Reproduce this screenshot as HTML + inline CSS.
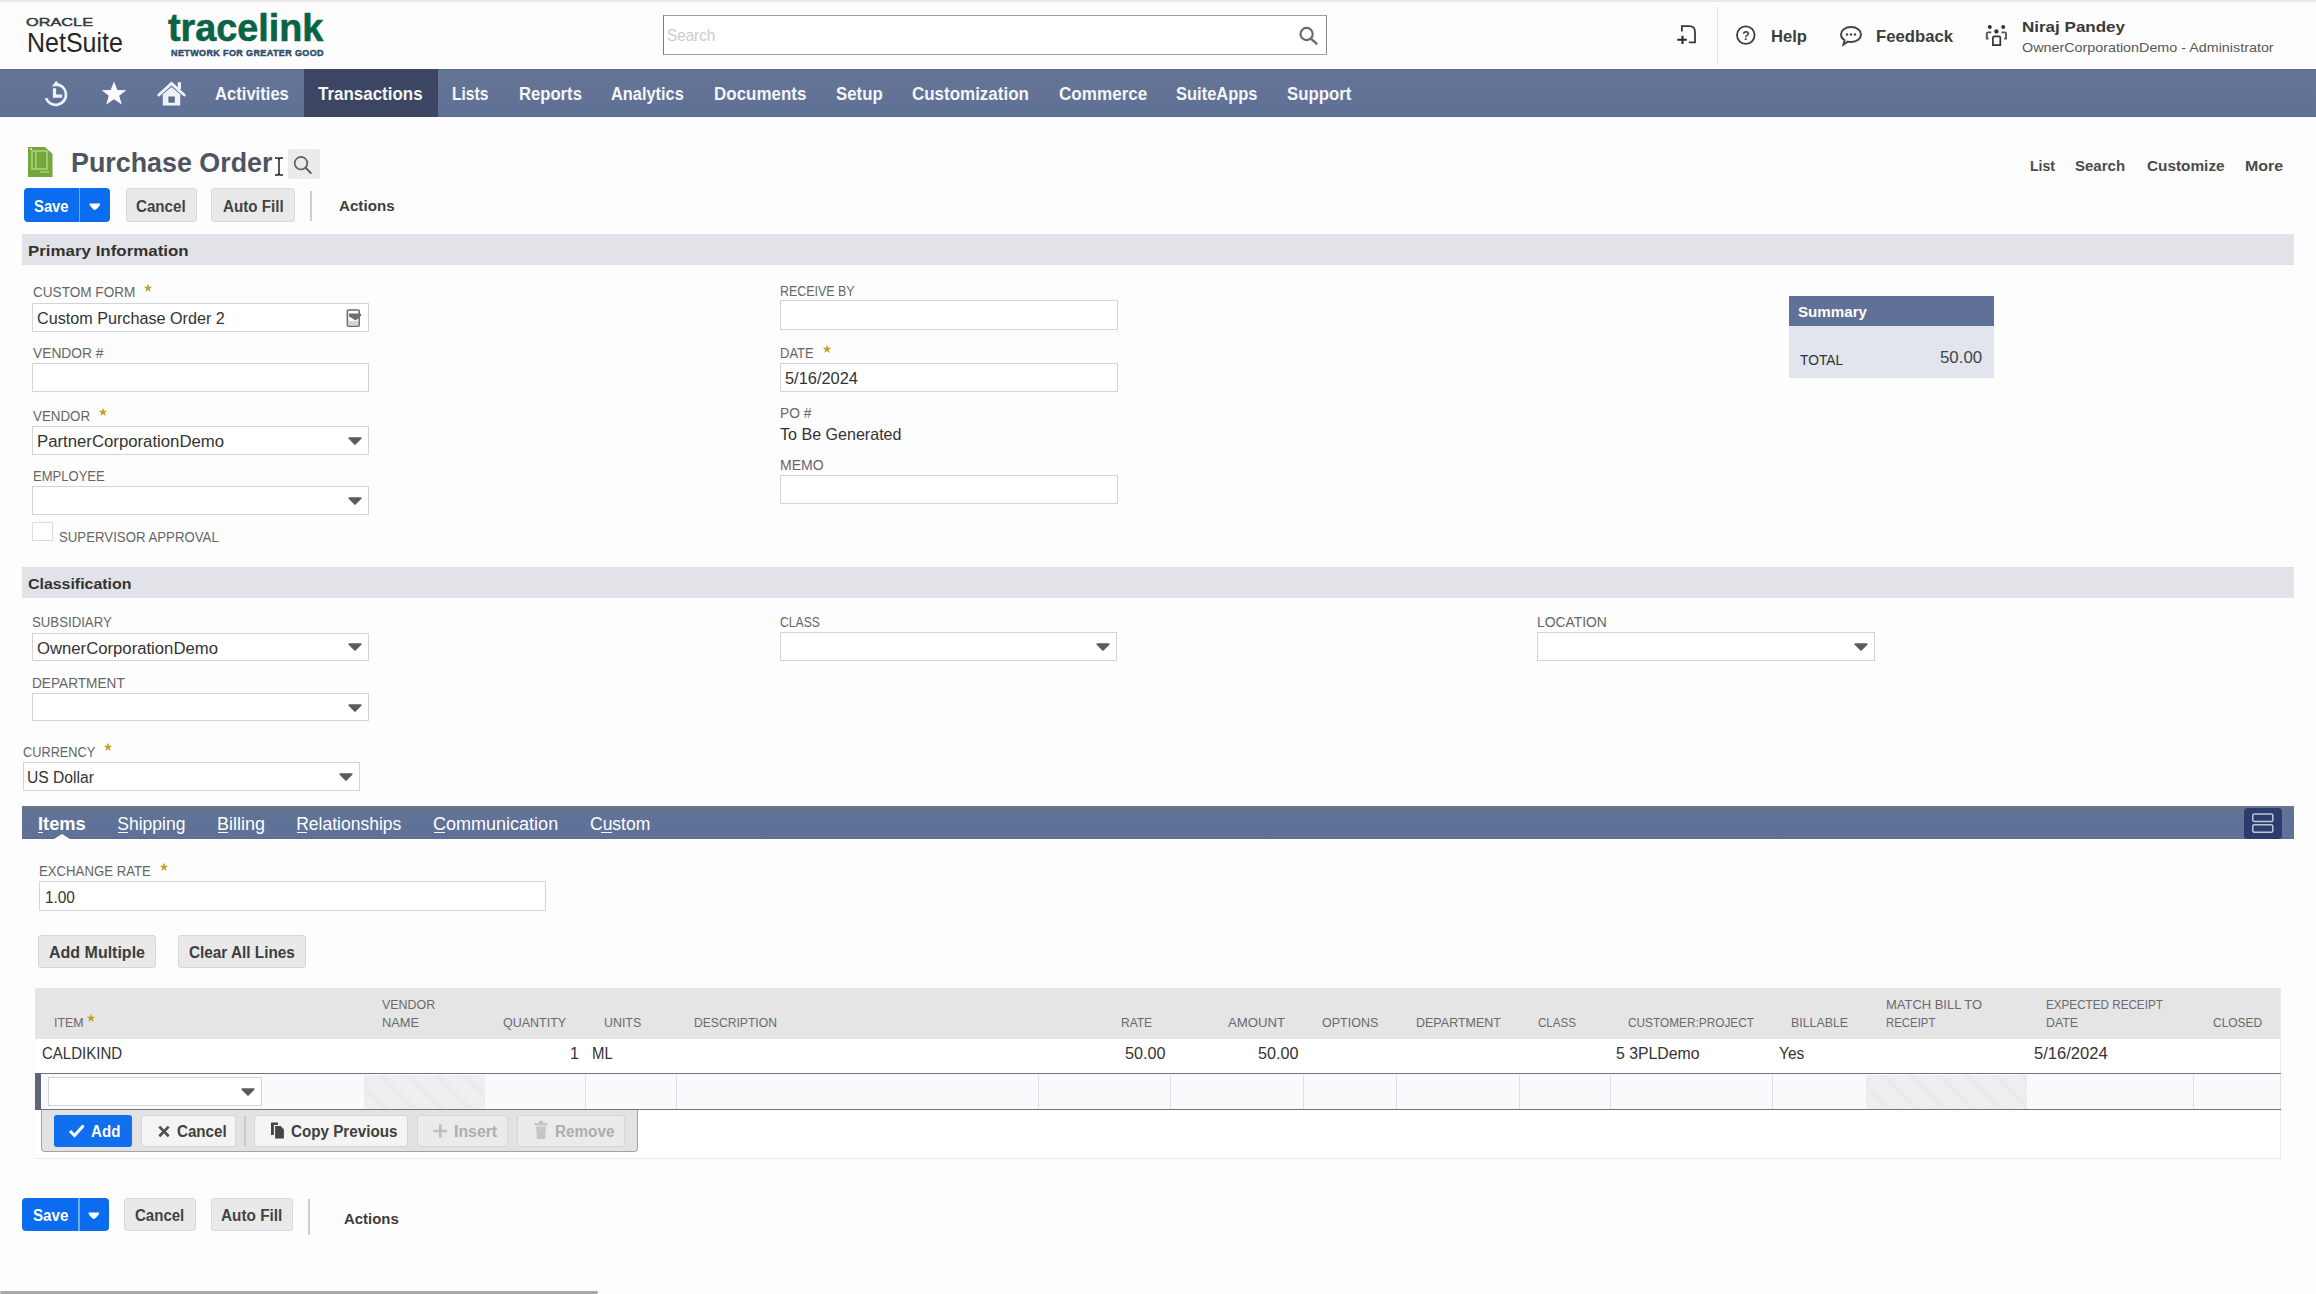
<!DOCTYPE html>
<html><head><meta charset="utf-8"><title>Purchase Order - NetSuite</title>
<style>
html,body{margin:0;padding:0;}
body{width:2316px;height:1294px;overflow:hidden;position:relative;background:#fdfdfd;font-family:"Liberation Sans",sans-serif;}
body>div,body>span,body>svg{position:absolute;}
.t{white-space:nowrap;line-height:1;}
svg{overflow:visible;}
</style></head><body>
<div style="left:0.0px;top:0.0px;width:2316.0px;height:2.0px;background:#e9e9e9"></div>
<span class="t" style="left:26.4px;top:17.4px;font-size:11.5px;color:#3a3a3a;transform:scaleX(1.4180);transform-origin:0 0;-webkit-text-stroke:0.45px #3a3a3a;">ORACLE</span>
<span class="t" style="left:26.8px;top:29.0px;font-size:28.0px;color:#262626;transform:scaleX(0.8922);transform-origin:0 0;">NetSuite</span>
<span class="t" style="left:168.0px;top:8.2px;font-size:39.5px;color:#0b6345;font-weight:700;transform:scaleX(0.9562);transform-origin:0 0;-webkit-text-stroke:0.6px #0b6345;">tracelink</span>
<span class="t" style="left:171.0px;top:48.7px;font-size:9.0px;color:#2d4d6e;font-weight:700;letter-spacing:0.38px;-webkit-text-stroke:0.45px #2d4d6e;">NETWORK FOR GREATER GOOD</span>
<div style="left:662.7px;top:14.5px;width:663.9px;height:40.8px;border:1.8px solid #9d9d9f;border-left-color:#7d7d7f;border-right-color:#8a8a8c;box-sizing:border-box;background:#fff"></div>
<span class="t" style="left:667.2px;top:27.4px;font-size:17.0px;color:#cbcbcb;transform:scaleX(0.8965);transform-origin:0 0;">Search</span>
<svg style="left:1297.0px;top:25.0px;" width="24.0" height="24.0" viewBox="0 0 24.0 24.0"><circle cx="9.6" cy="9" r="6.1" fill="none" stroke="#6a6a6a" stroke-width="2.2"/><line x1="14.2" y1="13.9" x2="19.5" y2="18.7" stroke="#6a6a6a" stroke-width="2.4" stroke-linecap="round"/></svg>
<svg style="left:1675.0px;top:24.0px;" width="24.0" height="23.0" viewBox="0 0 24.0 23.0"><path d="M6.9 7.4 V2.2 H14.4 Q20 2.2 20 8.2 V18.4 H13.8" fill="none" stroke="#3a3a3a" stroke-width="1.8"/><path d="M7.5 11.7 V19.9 M2.3 15.8 H11.8" stroke="#2a2a2a" stroke-width="2.1"/></svg>
<div style="left:1716.5px;top:7.0px;width:1.5px;height:57.0px;background:#e2e2e2"></div>
<svg style="left:1735.0px;top:24.0px;" width="24.0" height="23.0" viewBox="0 0 24.0 23.0"><circle cx="10.8" cy="11.1" r="8.8" fill="none" stroke="#3d3d3d" stroke-width="1.8"/><text x="10.9" y="15.6" font-size="12" font-weight="700" text-anchor="middle" fill="#3d3d3d" font-family="Liberation Sans">?</text></svg>
<span class="t" style="left:1770.9px;top:27.7px;font-size:16.5px;color:#3d3d3d;font-weight:700;transform:scaleX(1.0042);transform-origin:0 0;">Help</span>
<svg style="left:1839.0px;top:24.0px;" width="26.0" height="23.0" viewBox="0 0 26.0 23.0"><path d="M12 3 C18 3 22 6.5 22 10.5 C22 14.5 18 18 12 18 C10.8 18 9.8 17.9 8.8 17.6 L4.5 20.5 L5.6 16.3 C3.4 14.9 2 12.8 2 10.5 C2 6.5 6 3 12 3 Z" fill="none" stroke="#444" stroke-width="1.9"/><circle cx="8" cy="10.5" r="1.2" fill="#444"/><circle cx="12" cy="10.5" r="1.2" fill="#444"/><circle cx="16" cy="10.5" r="1.2" fill="#444"/></svg>
<span class="t" style="left:1875.8px;top:27.7px;font-size:16.5px;color:#3d3d3d;font-weight:700;transform:scaleX(1.0111);transform-origin:0 0;">Feedback</span>
<svg style="left:1983.0px;top:22.0px;" width="28.0" height="26.0" viewBox="0 0 28.0 26.0"><circle cx="6.8" cy="5" r="2" fill="#333"/><circle cx="20.2" cy="5" r="2" fill="#333"/><circle cx="13.4" cy="9.4" r="2.2" fill="#333"/><path d="M8.3 10.4 H5 Q3.8 10.4 3.8 11.6 V16.6 H5.6 M18.5 10.4 H21.8 Q23 10.4 23 11.6 V16.6 H21.2" fill="none" stroke="#555" stroke-width="1.9"/><path d="M9.9 23.2 V15.6 Q9.9 14.4 11.2 14.4 H16 Q17.3 14.4 17.3 15.6 V23.2 Z" fill="none" stroke="#333" stroke-width="1.7"/></svg>
<span class="t" style="left:2021.8px;top:18.6px;font-size:15.5px;color:#3a3a3a;font-weight:700;transform:scaleX(1.0972);transform-origin:0 0;">Niraj Pandey</span>
<span class="t" style="left:2021.8px;top:41.0px;font-size:13.0px;color:#585858;transform:scaleX(1.1021);transform-origin:0 0;">OwnerCorporationDemo - Administrator</span>
<div style="left:0.0px;top:69.0px;width:2316.0px;height:48.0px;background:linear-gradient(#5a6782 0,#647493 1.5px,#627396 50%,#5f7196 46px,#5b6a88 48px)"></div>
<div style="left:304.0px;top:69.0px;width:134.0px;height:48.0px;background:#3c4663"></div>
<svg style="left:42.0px;top:79.0px;" width="28.0" height="29.0" viewBox="0 0 28.0 29.0"><path d="M4.0 19.1 A10.3 10.3 0 1 0 13.9 5.3" fill="none" stroke="#eef3fb" stroke-width="2.7"/><path d="M9.8 7.4 L14.2 1.8 L17.8 7.0 Z" fill="#eef3fb"/><path d="M12.5 9.2 V17.2 H20.2" fill="none" stroke="#eef3fb" stroke-width="3.2"/></svg>
<svg style="left:100.0px;top:80.0px;" width="28.0" height="27.0" viewBox="0 0 28.0 27.0"><path d="M14 1.5 L17.3 10 L26.3 10.3 L19.2 15.8 L21.8 24.5 L14 19.3 L6.2 24.5 L8.8 15.8 L1.7 10.3 L10.7 10 Z" fill="#fff"/></svg>
<svg style="left:156.0px;top:79.0px;" width="32.0" height="28.0" viewBox="0 0 32.0 28.0"><path d="M2.8 16 L15.5 4.4 L28.2 16" fill="none" stroke="#eef3fb" stroke-width="2.9" stroke-linecap="round"/><rect x="21.8" y="3.2" width="3.2" height="6.8" fill="#eef3fb"/><path d="M6.8 15.2 L15.5 8 L24.2 15.2 V26.6 H6.8 Z" fill="#eef3fb"/><rect x="12.4" y="17.5" width="6.4" height="6.2" fill="#5f6d80"/></svg>
<span class="t" style="left:215.2px;top:86.4px;font-size:17.5px;color:#f4f6fa;font-weight:700;transform:scaleX(0.9492);transform-origin:0 0;">Activities</span>
<span class="t" style="left:318.0px;top:86.4px;font-size:17.5px;color:#f4f6fa;font-weight:700;transform:scaleX(0.9685);transform-origin:0 0;">Transactions</span>
<span class="t" style="left:452.3px;top:86.4px;font-size:17.5px;color:#f4f6fa;font-weight:700;transform:scaleX(0.8905);transform-origin:0 0;">Lists</span>
<span class="t" style="left:518.5px;top:86.4px;font-size:17.5px;color:#f4f6fa;font-weight:700;transform:scaleX(0.9512);transform-origin:0 0;">Reports</span>
<span class="t" style="left:611.2px;top:86.4px;font-size:17.5px;color:#f4f6fa;font-weight:700;transform:scaleX(0.9350);transform-origin:0 0;">Analytics</span>
<span class="t" style="left:714.0px;top:86.4px;font-size:17.5px;color:#f4f6fa;font-weight:700;transform:scaleX(0.9701);transform-origin:0 0;">Documents</span>
<span class="t" style="left:836.2px;top:86.4px;font-size:17.5px;color:#f4f6fa;font-weight:700;transform:scaleX(0.9604);transform-origin:0 0;">Setup</span>
<span class="t" style="left:912.3px;top:86.4px;font-size:17.5px;color:#f4f6fa;font-weight:700;transform:scaleX(0.9693);transform-origin:0 0;">Customization</span>
<span class="t" style="left:1058.9px;top:86.4px;font-size:17.5px;color:#f4f6fa;font-weight:700;transform:scaleX(0.9768);transform-origin:0 0;">Commerce</span>
<span class="t" style="left:1176.0px;top:86.4px;font-size:17.5px;color:#f4f6fa;font-weight:700;transform:scaleX(0.9422);transform-origin:0 0;">SuiteApps</span>
<span class="t" style="left:1287.3px;top:86.4px;font-size:17.5px;color:#f4f6fa;font-weight:700;transform:scaleX(0.9609);transform-origin:0 0;">Support</span>
<svg style="left:27.0px;top:146.0px;" width="27.0" height="32.0" viewBox="0 0 27.0 32.0"><path d="M1 1 H18 L25.5 8 V31 H1 Z" fill="#74a83d"/><rect x="5" y="5" width="15" height="18" fill="none" stroke="#b9d98c" stroke-width="1.3"/><line x1="9" y1="5" x2="9" y2="23" stroke="#b9d98c" stroke-width="1.3"/><rect x="13" y="25" width="9" height="2" fill="#9cc66a"/><rect x="3" y="2" width="2" height="2" fill="#cfe6ae"/></svg>
<span class="t" style="left:71.0px;top:149.6px;font-size:27.0px;color:#4d5462;font-weight:700;transform:scaleX(0.9944);transform-origin:0 0;">Purchase Order</span>
<svg style="left:274.0px;top:157.0px;" width="10.0" height="20.0" viewBox="0 0 10.0 20.0"><path d="M1 1 H4 Q5 1.5 5 3 V16 Q5 17.5 4 18 H1 M9 1 H6 Q5 1.5 5 3 M5 16 Q5 17.5 6 18 H9" stroke="#222" stroke-width="1.5" fill="none"/></svg>
<div style="left:288.2px;top:148.6px;width:31.6px;height:30.4px;background:#ebebed;border-radius:2px"></div>
<svg style="left:292.0px;top:154.0px;" width="22.0" height="22.0" viewBox="0 0 22.0 22.0"><circle cx="9" cy="9.2" r="6.3" fill="none" stroke="#606060" stroke-width="1.7"/><line x1="13.6" y1="13.8" x2="18.8" y2="19" stroke="#606060" stroke-width="2" stroke-linecap="round"/></svg>
<span class="t" style="left:2030.0px;top:157.7px;font-size:15.5px;color:#4a4a4a;font-weight:700;transform:scaleX(0.9091);transform-origin:0 0;">List</span>
<span class="t" style="left:2075.1px;top:157.7px;font-size:15.5px;color:#4a4a4a;font-weight:700;transform:scaleX(0.9681);transform-origin:0 0;">Search</span>
<span class="t" style="left:2146.5px;top:157.7px;font-size:15.5px;color:#4a4a4a;font-weight:700;transform:scaleX(0.9901);transform-origin:0 0;">Customize</span>
<span class="t" style="left:2245.4px;top:157.7px;font-size:15.5px;color:#4a4a4a;font-weight:700;transform:scaleX(1.0324);transform-origin:0 0;">More</span>
<div style="left:23.6px;top:188.3px;width:86.7px;height:33.9px;background:#0b6cf0;border-radius:4px"></div>
<div style="left:78.8px;top:188.3px;width:1.6px;height:33.9px;background:#6aaef8"></div>
<span class="t" style="left:34.3px;top:198.7px;font-size:16.0px;color:#fff;font-weight:700;transform:scaleX(0.9258);transform-origin:0 0;">Save</span>
<svg style="left:89.2px;top:202.5px;" width="12.0" height="8.0" viewBox="0 0 12.0 8.0"><path d="M0.3 0.4 H11.3 Q11.3 2.2 8.3 5.2 Q6.8 7 5.8 7 Q4.8 7 3.3 5.2 Q0.3 2.2 0.3 0.4 Z" fill="#fff"/></svg>
<div style="left:125.5px;top:188.3px;width:71.1px;height:33.9px;background:#e9e9ea;border:1px solid #d9d9db;box-sizing:border-box;border-radius:3px"></div>
<span class="t" style="left:135.9px;top:198.7px;font-size:16.0px;color:#434343;font-weight:700;transform:scaleX(0.9467);transform-origin:0 0;">Cancel</span>
<div style="left:211.2px;top:188.3px;width:83.5px;height:33.9px;background:#e9e9ea;border:1px solid #d9d9db;box-sizing:border-box;border-radius:3px"></div>
<span class="t" style="left:223.0px;top:198.7px;font-size:16.0px;color:#434343;font-weight:700;transform:scaleX(0.9484);transform-origin:0 0;">Auto Fill</span>
<div style="left:310.0px;top:191.0px;width:1.5px;height:30.3px;background:#cfcfcf"></div>
<span class="t" style="left:339.4px;top:198.3px;font-size:15.5px;color:#3d3d3d;font-weight:700;transform:scaleX(0.9776);transform-origin:0 0;">Actions</span>
<div style="left:22.0px;top:234.0px;width:2272.0px;height:31.4px;background:#e1e3e8"></div>
<span class="t" style="left:27.5px;top:243.9px;font-size:14.5px;color:#333;font-weight:700;transform:scaleX(1.1659);transform-origin:0 0;">Primary Information</span>
<span class="t" style="left:32.7px;top:283.9px;font-size:15.0px;color:#666;transform:scaleX(0.9053);transform-origin:0 0;">CUSTOM FORM</span>
<svg style="left:142.7px;top:282.5px;" width="11.0" height="10.0" viewBox="0 0 11.0 10.0"><path d="M5 0.8 L6.1 3.8 L9.3 3.8 L6.7 5.8 L7.7 8.9 L5 7 L2.3 8.9 L3.3 5.8 L0.7 3.8 L3.9 3.8 Z" fill="#c0a22c"/></svg>
<div style="left:32.0px;top:303.0px;width:337.3px;height:28.6px;background:#fff;border:1.5px solid #d4d4d6;box-sizing:border-box"></div>
<span class="t" style="left:37.0px;top:310.8px;font-size:16.0px;color:#333;transform:scaleX(1.0104);transform-origin:0 0;">Custom Purchase Order 2</span>
<svg style="left:345.0px;top:308.0px;" width="18.0" height="20.0" viewBox="0 0 18.0 20.0"><rect x="2.4" y="2" width="11.8" height="16.2" rx="1" fill="#fff" stroke="#6e6e6e" stroke-width="1.6"/><rect x="3.4" y="13" width="9.8" height="4.3" fill="#d4d4d6"/><path d="M4 5.6 H15.6 L16.4 7.2 L13.8 10 L10.4 12.6 L9.2 11.6 L4 8.6 Z" fill="#6d6d72"/></svg>
<span class="t" style="left:32.5px;top:344.9px;font-size:15.0px;color:#666;transform:scaleX(0.9186);transform-origin:0 0;">VENDOR #</span>
<div style="left:32.0px;top:363.0px;width:337.3px;height:29.0px;background:#fff;border:1.5px solid #d4d4d6;box-sizing:border-box"></div>
<span class="t" style="left:32.5px;top:407.6px;font-size:15.0px;color:#666;transform:scaleX(0.8904);transform-origin:0 0;">VENDOR</span>
<svg style="left:97.6px;top:406.8px;" width="11.0" height="10.0" viewBox="0 0 11.0 10.0"><path d="M5 0.8 L6.1 3.8 L9.3 3.8 L6.7 5.8 L7.7 8.9 L5 7 L2.3 8.9 L3.3 5.8 L0.7 3.8 L3.9 3.8 Z" fill="#c0a22c"/></svg>
<div style="left:32.0px;top:426.2px;width:337.3px;height:28.7px;background:#fff;border:1.5px solid #d4d4d6;box-sizing:border-box"></div>
<svg style="left:348.3px;top:437.0px;" width="14.0" height="8.0" viewBox="0 0 14.0 8.0"><path d="M1.3 1.2 H12.7 L7 6.9 Z" fill="#5c5c5c" stroke="#5c5c5c" stroke-width="1.9" stroke-linejoin="round"/></svg>
<span class="t" style="left:37.0px;top:434.0px;font-size:16.0px;color:#333;transform:scaleX(1.0467);transform-origin:0 0;">PartnerCorporationDemo</span>
<span class="t" style="left:32.5px;top:467.7px;font-size:15.0px;color:#666;transform:scaleX(0.8691);transform-origin:0 0;">EMPLOYEE</span>
<div style="left:32.0px;top:486.3px;width:337.3px;height:29.1px;background:#fff;border:1.5px solid #d4d4d6;box-sizing:border-box"></div>
<svg style="left:348.3px;top:497.4px;" width="14.0" height="8.0" viewBox="0 0 14.0 8.0"><path d="M1.3 1.2 H12.7 L7 6.9 Z" fill="#5c5c5c" stroke="#5c5c5c" stroke-width="1.9" stroke-linejoin="round"/></svg>
<div style="left:31.8px;top:521.5px;width:20.9px;height:19.7px;background:#fff;border:1.5px solid #dcdcdc;box-sizing:border-box"></div>
<span class="t" style="left:58.7px;top:528.6px;font-size:15.0px;color:#666;transform:scaleX(0.8817);transform-origin:0 0;">SUPERVISOR APPROVAL</span>
<span class="t" style="left:780.4px;top:282.7px;font-size:15.0px;color:#666;transform:scaleX(0.8289);transform-origin:0 0;">RECEIVE BY</span>
<div style="left:779.5px;top:300.0px;width:338.1px;height:29.8px;background:#fff;border:1.5px solid #d4d4d6;box-sizing:border-box"></div>
<span class="t" style="left:780.3px;top:344.9px;font-size:15.0px;color:#666;transform:scaleX(0.8669);transform-origin:0 0;">DATE</span>
<svg style="left:821.9px;top:344.0px;" width="11.0" height="10.0" viewBox="0 0 11.0 10.0"><path d="M5 0.8 L6.1 3.8 L9.3 3.8 L6.7 5.8 L7.7 8.9 L5 7 L2.3 8.9 L3.3 5.8 L0.7 3.8 L3.9 3.8 Z" fill="#c0a22c"/></svg>
<div style="left:779.5px;top:363.0px;width:338.1px;height:29.1px;background:#fff;border:1.5px solid #d4d4d6;box-sizing:border-box"></div>
<span class="t" style="left:784.8px;top:371.3px;font-size:16.0px;color:#333;transform:scaleX(1.0250);transform-origin:0 0;">5/16/2024</span>
<span class="t" style="left:780.3px;top:404.9px;font-size:15.0px;color:#666;transform:scaleX(0.9168);transform-origin:0 0;">PO #</span>
<span class="t" style="left:780.3px;top:426.3px;font-size:16.5px;color:#333;transform:scaleX(0.9739);transform-origin:0 0;">To Be Generated</span>
<span class="t" style="left:780.3px;top:457.0px;font-size:15.0px;color:#666;transform:scaleX(0.9373);transform-origin:0 0;">MEMO</span>
<div style="left:779.5px;top:475.0px;width:338.1px;height:29.2px;background:#fff;border:1.5px solid #d4d4d6;box-sizing:border-box"></div>
<div style="left:1789.0px;top:296.0px;width:205.0px;height:30.4px;background:#5f7197"></div>
<div style="left:1789.0px;top:326.4px;width:205.0px;height:51.4px;background:#e2e5ed"></div>
<span class="t" style="left:1798.0px;top:304.0px;font-size:15.5px;color:#fff;font-weight:700;transform:scaleX(0.9770);transform-origin:0 0;">Summary</span>
<span class="t" style="left:1799.7px;top:352.0px;font-size:15.0px;color:#333;transform:scaleX(0.9191);transform-origin:0 0;">TOTAL</span>
<span class="t" style="left:1940.3px;top:348.6px;font-size:17.0px;color:#444;transform:scaleX(0.9906);transform-origin:0 0;">50.00</span>
<div style="left:22.0px;top:567.0px;width:2272.0px;height:30.8px;background:#e1e3e8"></div>
<span class="t" style="left:27.6px;top:576.5px;font-size:14.5px;color:#333;font-weight:700;transform:scaleX(1.0971);transform-origin:0 0;">Classification</span>
<span class="t" style="left:32.0px;top:614.4px;font-size:15.0px;color:#666;transform:scaleX(0.8806);transform-origin:0 0;">SUBSIDIARY</span>
<div style="left:32.0px;top:632.8px;width:337.2px;height:28.2px;background:#fff;border:1.5px solid #d4d4d6;box-sizing:border-box"></div>
<svg style="left:348.2px;top:643.4px;" width="14.0" height="8.0" viewBox="0 0 14.0 8.0"><path d="M1.3 1.2 H12.7 L7 6.9 Z" fill="#5c5c5c" stroke="#5c5c5c" stroke-width="1.9" stroke-linejoin="round"/></svg>
<span class="t" style="left:37.1px;top:641.3px;font-size:16.0px;color:#333;transform:scaleX(1.0434);transform-origin:0 0;">OwnerCorporationDemo</span>
<span class="t" style="left:32.0px;top:674.8px;font-size:15.0px;color:#666;transform:scaleX(0.9098);transform-origin:0 0;">DEPARTMENT</span>
<div style="left:32.0px;top:693.2px;width:337.2px;height:28.3px;background:#fff;border:1.5px solid #d4d4d6;box-sizing:border-box"></div>
<svg style="left:348.2px;top:703.9px;" width="14.0" height="8.0" viewBox="0 0 14.0 8.0"><path d="M1.3 1.2 H12.7 L7 6.9 Z" fill="#5c5c5c" stroke="#5c5c5c" stroke-width="1.9" stroke-linejoin="round"/></svg>
<span class="t" style="left:780.4px;top:614.4px;font-size:15.0px;color:#666;transform:scaleX(0.8102);transform-origin:0 0;">CLASS</span>
<div style="left:779.5px;top:632.1px;width:337.7px;height:29.0px;background:#fff;border:1.5px solid #d4d4d6;box-sizing:border-box"></div>
<svg style="left:1096.2px;top:643.1px;" width="14.0" height="8.0" viewBox="0 0 14.0 8.0"><path d="M1.3 1.2 H12.7 L7 6.9 Z" fill="#5c5c5c" stroke="#5c5c5c" stroke-width="1.9" stroke-linejoin="round"/></svg>
<span class="t" style="left:1536.9px;top:614.4px;font-size:15.0px;color:#666;transform:scaleX(0.9243);transform-origin:0 0;">LOCATION</span>
<div style="left:1536.5px;top:632.1px;width:338.2px;height:29.0px;background:#fff;border:1.5px solid #d4d4d6;box-sizing:border-box"></div>
<svg style="left:1853.7px;top:643.1px;" width="14.0" height="8.0" viewBox="0 0 14.0 8.0"><path d="M1.3 1.2 H12.7 L7 6.9 Z" fill="#5c5c5c" stroke="#5c5c5c" stroke-width="1.9" stroke-linejoin="round"/></svg>
<span class="t" style="left:22.7px;top:743.5px;font-size:15.0px;color:#666;transform:scaleX(0.8506);transform-origin:0 0;">CURRENCY</span>
<svg style="left:103.3px;top:742.0px;" width="11.0" height="10.0" viewBox="0 0 11.0 10.0"><path d="M5 0.8 L6.1 3.8 L9.3 3.8 L6.7 5.8 L7.7 8.9 L5 7 L2.3 8.9 L3.3 5.8 L0.7 3.8 L3.9 3.8 Z" fill="#c0a22c"/></svg>
<div style="left:22.7px;top:761.9px;width:337.2px;height:28.7px;background:#fff;border:1.5px solid #d4d4d6;box-sizing:border-box"></div>
<svg style="left:338.9px;top:772.8px;" width="14.0" height="8.0" viewBox="0 0 14.0 8.0"><path d="M1.3 1.2 H12.7 L7 6.9 Z" fill="#5c5c5c" stroke="#5c5c5c" stroke-width="1.9" stroke-linejoin="round"/></svg>
<span class="t" style="left:27.0px;top:769.8px;font-size:16.0px;color:#333;transform:scaleX(0.9766);transform-origin:0 0;">US Dollar</span>
<div style="left:22.0px;top:805.7px;width:2272.0px;height:33.7px;background:linear-gradient(#6b7689 0,#63738f 4px,#5f7299 50%,#5f7196 31px,#5b6a88 33.7px)"></div>
<span class="t" style="left:37.8px;top:816.2px;font-size:17.5px;color:#fff;font-weight:700;transform:scaleX(1.0426);transform-origin:0 0;">Items</span>
<span class="t" style="left:117.3px;top:816.2px;font-size:17.5px;color:#fff;">Shipping</span>
<span class="t" style="left:217.0px;top:816.2px;font-size:17.5px;color:#fff;transform:scaleX(1.0267);transform-origin:0 0;">Billing</span>
<span class="t" style="left:296.2px;top:816.2px;font-size:17.5px;color:#fff;">Relationships</span>
<span class="t" style="left:433.0px;top:816.2px;font-size:17.5px;color:#fff;transform:scaleX(1.0294);transform-origin:0 0;">Communication</span>
<span class="t" style="left:590.0px;top:816.2px;font-size:17.5px;color:#fff;">Custom</span>
<div style="left:38.0px;top:831.6px;width:5.0px;height:1.5px;background:#f4f6fa"></div>
<div style="left:117.5px;top:831.6px;width:10.5px;height:1.5px;background:#f4f6fa"></div>
<div style="left:217.5px;top:831.6px;width:10.5px;height:1.5px;background:#f4f6fa"></div>
<div style="left:296.5px;top:831.6px;width:10.5px;height:1.5px;background:#f4f6fa"></div>
<div style="left:433.5px;top:831.6px;width:11.5px;height:1.5px;background:#f4f6fa"></div>
<div style="left:601.0px;top:831.6px;width:11.0px;height:1.5px;background:#f4f6fa"></div>
<svg style="left:51.5px;top:833.6px;" width="20.0" height="6.2" viewBox="0 0 20.0 6.2"><path d="M0 6.2 L10 0 L20 6.2 Z" fill="#fdfdfd"/></svg>
<div style="left:2244.4px;top:807.5px;width:37.3px;height:31.2px;background:#2b3d6c;border-radius:4px"></div>
<svg style="left:2250.0px;top:812.0px;" width="26.0" height="23.0" viewBox="0 0 26.0 23.0"><rect x="2.8" y="2" width="20" height="7.5" rx="1.5" fill="none" stroke="#bcc6dc" stroke-width="1.5"/><rect x="2.8" y="12.8" width="20" height="7.5" rx="1.5" fill="none" stroke="#bcc6dc" stroke-width="1.5"/></svg>
<span class="t" style="left:39.3px;top:863.1px;font-size:15.0px;color:#666;transform:scaleX(0.8786);transform-origin:0 0;">EXCHANGE RATE</span>
<svg style="left:159.2px;top:861.5px;" width="11.0" height="10.0" viewBox="0 0 11.0 10.0"><path d="M5 0.8 L6.1 3.8 L9.3 3.8 L6.7 5.8 L7.7 8.9 L5 7 L2.3 8.9 L3.3 5.8 L0.7 3.8 L3.9 3.8 Z" fill="#c0a22c"/></svg>
<div style="left:39.3px;top:881.3px;width:507.1px;height:29.6px;background:#fff;border:1.5px solid #d4d4d6;box-sizing:border-box"></div>
<span class="t" style="left:44.7px;top:889.7px;font-size:16.0px;color:#333;transform:scaleX(0.9606);transform-origin:0 0;">1.00</span>
<div style="left:38.1px;top:934.5px;width:117.5px;height:33.2px;background:#e9e9ea;border:1px solid #d6d6d8;box-sizing:border-box;border-radius:3px"></div>
<span class="t" style="left:49.0px;top:944.7px;font-size:16.0px;color:#3d3d3d;font-weight:700;">Add Multiple</span>
<div style="left:178.3px;top:934.5px;width:127.5px;height:33.2px;background:#e9e9ea;border:1px solid #d6d6d8;box-sizing:border-box;border-radius:3px"></div>
<span class="t" style="left:188.9px;top:944.7px;font-size:16.0px;color:#3d3d3d;font-weight:700;transform:scaleX(0.9575);transform-origin:0 0;">Clear All Lines</span>
<div style="left:34.5px;top:987.6px;width:2246.6px;height:51.1px;background:#e5e5e5;border-right:1px solid #ececec;box-sizing:border-box"></div>
<span class="t" style="left:53.5px;top:1016.3px;font-size:13.5px;color:#6a6a6a;transform:scaleX(0.9209);transform-origin:0 0;">ITEM</span>
<svg style="left:86.4px;top:1012.9px;" width="11.0" height="10.0" viewBox="0 0 11.0 10.0"><path d="M5 0.8 L6.1 3.8 L9.3 3.8 L6.7 5.8 L7.7 8.9 L5 7 L2.3 8.9 L3.3 5.8 L0.7 3.8 L3.9 3.8 Z" fill="#c0a22c"/></svg>
<span class="t" style="left:382.0px;top:998.4px;font-size:13.5px;color:#6a6a6a;transform:scaleX(0.9212);transform-origin:0 0;">VENDOR</span>
<span class="t" style="left:382.0px;top:1016.3px;font-size:13.5px;color:#6a6a6a;transform:scaleX(0.9487);transform-origin:0 0;">NAME</span>
<span class="t" style="left:502.6px;top:1016.3px;font-size:13.5px;color:#6a6a6a;transform:scaleX(0.9260);transform-origin:0 0;">QUANTITY</span>
<span class="t" style="left:603.8px;top:1016.3px;font-size:13.5px;color:#6a6a6a;transform:scaleX(0.9185);transform-origin:0 0;">UNITS</span>
<span class="t" style="left:694.3px;top:1016.3px;font-size:13.5px;color:#6a6a6a;transform:scaleX(0.8986);transform-origin:0 0;">DESCRIPTION</span>
<span class="t" style="left:1121.2px;top:1016.3px;font-size:13.5px;color:#6a6a6a;transform:scaleX(0.8886);transform-origin:0 0;">RATE</span>
<span class="t" style="left:1228.3px;top:1016.3px;font-size:13.5px;color:#6a6a6a;transform:scaleX(0.9744);transform-origin:0 0;">AMOUNT</span>
<span class="t" style="left:1322.3px;top:1016.3px;font-size:13.5px;color:#6a6a6a;transform:scaleX(0.9267);transform-origin:0 0;">OPTIONS</span>
<span class="t" style="left:1415.5px;top:1016.3px;font-size:13.5px;color:#6a6a6a;transform:scaleX(0.9264);transform-origin:0 0;">DEPARTMENT</span>
<span class="t" style="left:1537.5px;top:1016.3px;font-size:13.5px;color:#6a6a6a;transform:scaleX(0.8588);transform-origin:0 0;">CLASS</span>
<span class="t" style="left:1628.3px;top:1016.3px;font-size:13.5px;color:#6a6a6a;transform:scaleX(0.8765);transform-origin:0 0;">CUSTOMER:PROJECT</span>
<span class="t" style="left:1791.3px;top:1016.3px;font-size:13.5px;color:#6a6a6a;transform:scaleX(0.9157);transform-origin:0 0;">BILLABLE</span>
<span class="t" style="left:2213.0px;top:1016.3px;font-size:13.5px;color:#6a6a6a;transform:scaleX(0.8847);transform-origin:0 0;">CLOSED</span>
<span class="t" style="left:1885.6px;top:998.4px;font-size:13.5px;color:#6a6a6a;transform:scaleX(0.9600);transform-origin:0 0;">MATCH BILL TO</span>
<span class="t" style="left:1885.6px;top:1016.3px;font-size:13.5px;color:#6a6a6a;transform:scaleX(0.8444);transform-origin:0 0;">RECEIPT</span>
<span class="t" style="left:2046.2px;top:998.4px;font-size:13.5px;color:#6a6a6a;transform:scaleX(0.8652);transform-origin:0 0;">EXPECTED RECEIPT</span>
<span class="t" style="left:2046.2px;top:1016.3px;font-size:13.5px;color:#6a6a6a;transform:scaleX(0.9171);transform-origin:0 0;">DATE</span>
<div style="left:34.5px;top:1038.7px;width:2246.6px;height:120.6px;background:#fff;border-right:1px solid #ececec;border-bottom:1.5px solid #ebebeb;box-sizing:border-box"></div>
<span class="t" style="left:41.8px;top:1045.8px;font-size:16.0px;color:#333;transform:scaleX(0.9382);transform-origin:0 0;">CALDIKIND</span>
<span class="t" style="left:570.0px;top:1045.8px;font-size:16.0px;color:#333;">1</span>
<span class="t" style="left:591.7px;top:1045.8px;font-size:16.0px;color:#333;transform:scaleX(0.9303);transform-origin:0 0;">ML</span>
<span class="t" style="left:1124.7px;top:1045.8px;font-size:16.0px;color:#333;transform:scaleX(1.0100);transform-origin:0 0;">50.00</span>
<span class="t" style="left:1257.7px;top:1045.8px;font-size:16.0px;color:#333;transform:scaleX(1.0100);transform-origin:0 0;">50.00</span>
<span class="t" style="left:1616.2px;top:1045.8px;font-size:16.0px;color:#333;transform:scaleX(0.9893);transform-origin:0 0;">5 3PLDemo</span>
<span class="t" style="left:1779.2px;top:1045.8px;font-size:16.0px;color:#333;transform:scaleX(0.9646);transform-origin:0 0;">Yes</span>
<span class="t" style="left:2034.1px;top:1045.8px;font-size:16.0px;color:#333;transform:scaleX(1.0348);transform-origin:0 0;">5/16/2024</span>
<div style="left:34.5px;top:1073.3px;width:2246.6px;height:36.7px;background:#f8fafb;border-top:1.5px solid #6f757c;border-bottom:1.5px solid #6f757c;box-sizing:border-box"></div>
<div style="left:34.5px;top:1073.3px;width:6.9px;height:36.7px;background:#5d647c"></div>
<div style="left:363.7px;top:1075.0px;width:120.9px;height:33.5px;background:repeating-linear-gradient(45deg,#e6e7e9 0,#e6e7e9 1px,#f1f2f3 1px,#f1f2f3 2.2px)"></div>
<div style="left:1865.6px;top:1075.0px;width:161.6px;height:33.5px;background:repeating-linear-gradient(45deg,#e6e7e9 0,#e6e7e9 1px,#f1f2f3 1px,#f1f2f3 2.2px)"></div>
<div style="left:584.8px;top:1075.0px;width:1.0px;height:33.5px;background:#dfe2e5"></div>
<div style="left:675.6px;top:1075.0px;width:1.0px;height:33.5px;background:#dfe2e5"></div>
<div style="left:1037.6px;top:1075.0px;width:1.0px;height:33.5px;background:#dfe2e5"></div>
<div style="left:1170.3px;top:1075.0px;width:1.0px;height:33.5px;background:#dfe2e5"></div>
<div style="left:1303.3px;top:1075.0px;width:1.0px;height:33.5px;background:#dfe2e5"></div>
<div style="left:1395.5px;top:1075.0px;width:1.0px;height:33.5px;background:#dfe2e5"></div>
<div style="left:1518.7px;top:1075.0px;width:1.0px;height:33.5px;background:#dfe2e5"></div>
<div style="left:1610.0px;top:1075.0px;width:1.0px;height:33.5px;background:#dfe2e5"></div>
<div style="left:1772.3px;top:1075.0px;width:1.0px;height:33.5px;background:#dfe2e5"></div>
<div style="left:2193.0px;top:1075.0px;width:1.0px;height:33.5px;background:#dfe2e5"></div>
<div style="left:2279.5px;top:1075.0px;width:1.6px;height:33.5px;background:#dfe2e5"></div>
<div style="left:48.3px;top:1077.4px;width:213.5px;height:28.3px;background:#fff;border:1.5px solid #d4d4d6;box-sizing:border-box"></div>
<svg style="left:240.8px;top:1088.1px;" width="14.0" height="8.0" viewBox="0 0 14.0 8.0"><path d="M1.3 1.2 H12.7 L7 6.9 Z" fill="#5c5c5c" stroke="#5c5c5c" stroke-width="1.9" stroke-linejoin="round"/></svg>
<div style="left:41.4px;top:1110.0px;width:596.2px;height:41.7px;background:#e2e2e2;border:1.5px solid #a4a4a4;border-top:none;box-sizing:border-box;border-radius:0 0 4px 4px"></div>
<div style="left:53.5px;top:1114.7px;width:78.1px;height:32.8px;background:#0f6fef;border-radius:3px"></div>
<svg style="left:68.0px;top:1123.0px;" width="18.0" height="16.0" viewBox="0 0 18.0 16.0"><path d="M2 8 L6.5 12.5 L15.5 2.5" fill="none" stroke="#fff" stroke-width="3"/></svg>
<span class="t" style="left:90.8px;top:1124.2px;font-size:16.0px;color:#fff;font-weight:700;transform:scaleX(0.9446);transform-origin:0 0;">Add</span>
<div style="left:140.9px;top:1114.7px;width:95.0px;height:32.8px;background:#f4f4f4;border:1px solid #d5d5d5;box-sizing:border-box;border-radius:3px"></div>
<div style="left:253.9px;top:1114.7px;width:153.7px;height:32.8px;background:#f4f4f4;border:1px solid #d5d5d5;box-sizing:border-box;border-radius:3px"></div>
<div style="left:416.5px;top:1114.7px;width:91.6px;height:32.8px;background:#ebebeb;border:1px solid #d5d5d5;box-sizing:border-box;border-radius:3px"></div>
<div style="left:516.7px;top:1114.7px;width:108.5px;height:32.8px;background:#ebebeb;border:1px solid #d5d5d5;box-sizing:border-box;border-radius:3px"></div>
<div style="left:244.0px;top:1116.0px;width:1.5px;height:30.0px;background:#c9c9c9"></div>
<svg style="left:157.0px;top:1124.0px;" width="16.0" height="15.0" viewBox="0 0 16.0 15.0"><path d="M2.3 2.6 L11.7 12.2 M11.7 2.6 L2.3 12.2" stroke="#505050" stroke-width="2.7"/></svg>
<span class="t" style="left:176.5px;top:1124.2px;font-size:16.0px;color:#404040;font-weight:700;transform:scaleX(0.9467);transform-origin:0 0;">Cancel</span>
<svg style="left:269.0px;top:1121.0px;" width="18.0" height="19.0" viewBox="0 0 18.0 19.0"><path d="M2 1.5 H9 V14 H2 Z" fill="#444"/><path d="M5.5 4.5 H12 L15.5 8 V18 H5.5 Z" fill="#444" stroke="#f4f4f4" stroke-width="1.2"/></svg>
<span class="t" style="left:291.2px;top:1124.2px;font-size:16.0px;color:#404040;font-weight:700;transform:scaleX(0.9500);transform-origin:0 0;">Copy Previous</span>
<svg style="left:432.0px;top:1123.0px;" width="17.0" height="16.0" viewBox="0 0 17.0 16.0"><path d="M8.3 1.5 V14.5 M1.5 8 H15" stroke="#bdbdbd" stroke-width="2.6"/></svg>
<span class="t" style="left:453.5px;top:1124.2px;font-size:16.0px;color:#adadad;font-weight:700;transform:scaleX(0.9903);transform-origin:0 0;">Insert</span>
<svg style="left:533.0px;top:1120.0px;" width="17.0" height="20.0" viewBox="0 0 17.0 20.0"><rect x="1.5" y="3" width="13" height="2.4" fill="#c5c5c5"/><rect x="6" y="0.8" width="4" height="2.5" fill="#c5c5c5"/><path d="M3 6.5 H13 L12 19 H4 Z" fill="#c5c5c5"/></svg>
<span class="t" style="left:554.7px;top:1124.2px;font-size:16.0px;color:#adadad;font-weight:700;transform:scaleX(0.9542);transform-origin:0 0;">Remove</span>
<div style="left:22.0px;top:1197.8px;width:86.8px;height:33.2px;background:#0b6cf0;border-radius:4px"></div>
<div style="left:78.0px;top:1197.8px;width:1.6px;height:33.2px;background:#6aaef8"></div>
<span class="t" style="left:32.6px;top:1208.4px;font-size:16.0px;color:#fff;font-weight:700;transform:scaleX(0.9472);transform-origin:0 0;">Save</span>
<svg style="left:87.8px;top:1212.2px;" width="12.0" height="8.0" viewBox="0 0 12.0 8.0"><path d="M0.3 0.4 H11.3 Q11.3 2.2 8.3 5.2 Q6.8 7 5.8 7 Q4.8 7 3.3 5.2 Q0.3 2.2 0.3 0.4 Z" fill="#fff"/></svg>
<div style="left:123.9px;top:1197.8px;width:71.9px;height:33.2px;background:#e9e9ea;border:1px solid #d9d9db;box-sizing:border-box;border-radius:3px"></div>
<span class="t" style="left:135.0px;top:1208.4px;font-size:16.0px;color:#434343;font-weight:700;transform:scaleX(0.9390);transform-origin:0 0;">Cancel</span>
<div style="left:210.9px;top:1197.8px;width:82.2px;height:33.2px;background:#e9e9ea;border:1px solid #d9d9db;box-sizing:border-box;border-radius:3px"></div>
<span class="t" style="left:221.2px;top:1208.4px;font-size:16.0px;color:#434343;font-weight:700;transform:scaleX(0.9594);transform-origin:0 0;">Auto Fill</span>
<div style="left:308.3px;top:1198.7px;width:1.5px;height:36.3px;background:#cfcfcf"></div>
<span class="t" style="left:343.6px;top:1210.5px;font-size:15.5px;color:#3d3d3d;font-weight:700;transform:scaleX(0.9618);transform-origin:0 0;">Actions</span>
<div style="left:0.0px;top:1290.5px;width:598.0px;height:3.5px;background:#a9a9a9;border-radius:2px"></div>
</body></html>
